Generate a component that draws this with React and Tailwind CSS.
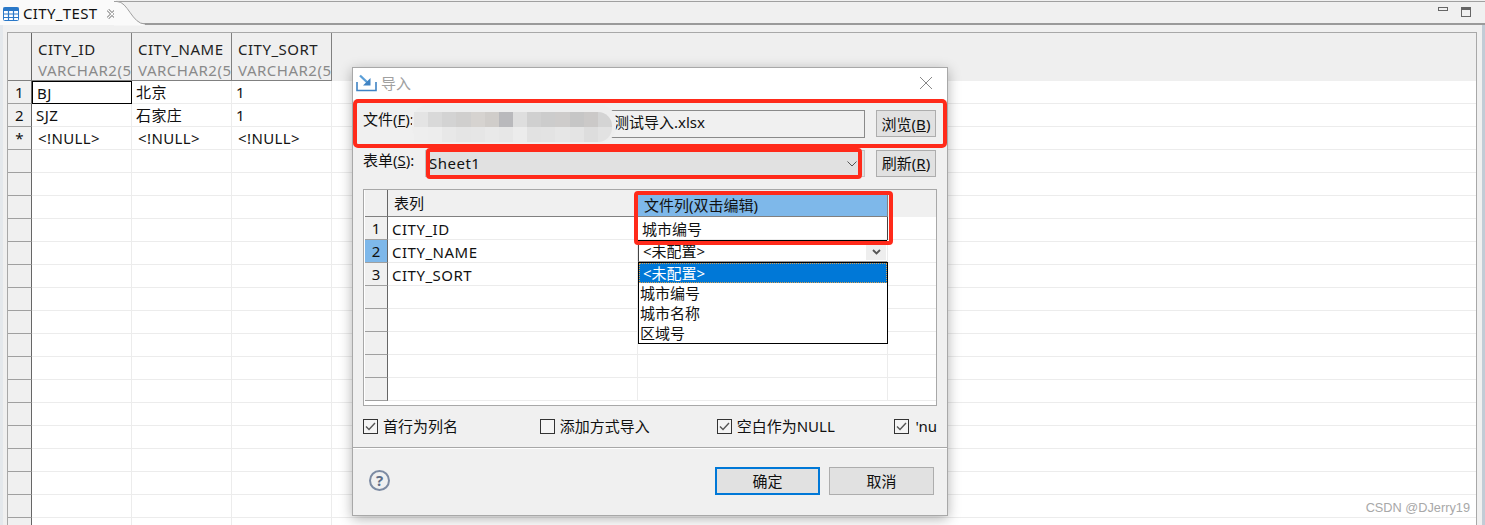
import React from "react";

const FONT = "font-['Noto_Sans','Noto_Sans_CJK_SC',sans-serif]";

const tableRows = [
  { num: "1", cells: ["BJ", "北京", "1"], selected: true },
  { num: "2", cells: ["SJZ", "石家庄", "1"] },
  { num: "*", cells: ["<!NULL>", "<!NULL>", "<!NULL>"], isNew: true },
];

const mosaicTop = [
  "bg-[#e4e4e4]", "bg-[#d9d9d9]", "bg-[#d3d3d3]", "bg-[#d0cfce]", "bg-[#d6d3d0]", "bg-[#d0cdca]", "bg-[#b9b9bc]",
  "bg-[#dedede]", "bg-[#d0d0d0]", "bg-[#cccccc]", "bg-[#cecccb]", "bg-[#c6c6c6]", "bg-[#cbc9c8]", "bg-[#d4d4d4]",
];
const mosaicBottom = [
  "bg-[#eeeeee]", "bg-[#ededed]", "bg-[#e8e8e8]", "bg-[#e5e5e5]", "bg-[#e6e6e6]", "bg-[#e9e9e9]", "bg-[#e7e7e7]",
  "bg-[#ececec]", "bg-[#e2e2e2]", "bg-[#e3e3e3]", "bg-[#e6e6e6]", "bg-[#e4e4e4]", "bg-[#dddddd]", "bg-[#e2e2e2]",
];

function TableIcon() {
  return (
    <svg width="16" height="14" viewBox="0 0 16 14" className="shrink-0">
      <rect x="0.5" y="0.5" width="15" height="13" rx="1" fill="#fff" stroke="#2a78c8" />
      <rect x="0.5" y="0.5" width="15" height="3.5" fill="#2a78c8" />
      <path d="M1 7h14M1 10.5h14M5.5 3v10M10.5 3v10" stroke="#2a78c8" strokeWidth="1.2" />
    </svg>
  );
}

function Check({ checked, className = "" }) {
  return (
    <span className={`flex h-[15px] w-[15px] shrink-0 items-center justify-center border border-[#333] bg-[#f4f4f4] ${className}`}>
      {checked && (
        <svg width="11" height="9" viewBox="0 0 11 9" fill="none" stroke="#555" strokeWidth="1.4">
          <path d="M1 4.5 4 7.5 10 1" />
        </svg>
      )}
    </span>
  );
}

function Background() {
  return (
    <div className="flex h-full flex-col">
      {/* editor tab bar */}
      <div className="relative flex h-[25px] shrink-0 border-b-2 border-[#9a9a9a] bg-[#f0f0f0]">
        <div className="absolute right-0 top-px h-px w-full bg-[#a0a0a0]" />
        <div className="relative z-10 flex h-[25px] w-[116px] items-center gap-[4px] bg-[#fafafa] pl-[3px] pt-[2px] text-[15px] leading-none tracking-[0.35px] text-[#111]">
          <TableIcon />
          <span className="whitespace-nowrap">CITY_TEST</span>
          <svg width="12" height="12" viewBox="0 0 12 12" className="ml-[5px] shrink-0">
            <path d="M2 2l8 8M10 2l-8 8" stroke="#777" strokeWidth="3" />
            <path d="M2 2l8 8M10 2l-8 8" stroke="#fff" strokeWidth="1.2" />
          </svg>
          <svg width="32" height="26" viewBox="0 0 32 26" className="absolute left-[114px] top-0">
            <path d="M0 25.5V1.5h3C14 1.5 18 24 31 24v1.5Z" fill="#fafafa" />
            <path d="M0 1.5h3C14 1.5 18 24 31 24" fill="none" stroke="#a0a0a0" />
          </svg>
        </div>
        <div className="ml-auto flex items-start gap-[13px] pr-[14px] pt-[7px]">
          <span className="h-[4px] w-[10px] border border-[#666]" />
          <span className="h-[10px] w-[10px] border border-[#666] border-t-[3px]" />
        </div>
      </div>

      {/* result grid */}
      <div className="flex min-h-0 flex-1 flex-col border-x-[3px] border-r-[#c2ccd6] border-l-[#e4e8ec] bg-[#f0f0f0] pl-[4px] pr-[5px] pt-[7px]">
        <div className="flex min-h-0 flex-1 flex-col overflow-hidden border border-b-0 border-[#a8a8a8] bg-white">
          <div className="flex h-[48px] shrink-0 bg-[#efefef]">
            <div className="h-full w-[24px] shrink-0 border-b border-r border-b-[#808080] border-r-[#666]" />
            {["CITY_ID", "CITY_NAME", "CITY_SORT"].map((name) => (
              <div key={name} className="flex h-full w-[100px] flex-col overflow-hidden border-b border-r border-[#808080] pl-[6px] pt-[6px] text-[15px] leading-[21px] tracking-[0.5px] whitespace-nowrap">
                <span className="text-[#222]">{name}</span>
                <span className="text-[#8a8a8a]">VARCHAR2(50)</span>
              </div>
            ))}
          </div>
          {Array.from({ length: 20 }).map((_, i) => {
            const row = tableRows[i];
            return (
              <div key={i} className="flex h-[23px] shrink-0 border-b border-[#ececec] text-[15px] leading-[23px] tracking-[0.4px] text-[#111]">
                <div className="flex h-[23px] w-[24px] shrink-0 items-center justify-center border-b border-r border-b-[#a0a0a0] border-r-[#666] bg-[#f0f0f0]">
                  {row?.num}
                </div>
                {[0, 1, 2].map((c) => (
                  <div
                    key={c}
                    className={`h-[23px] w-[100px] shrink-0 whitespace-nowrap ${row?.isNew ? "pl-[6px]" : "pl-[4px]"} ${
                      row?.selected && c === 0 ? "border border-black" : "border-r border-[#ececec]"
                    }`}
                  >
                    {row?.cells[c]}
                  </div>
                ))}
              </div>
            );
          })}
        </div>
      </div>
    </div>
  );
}

function ImportDialog() {
  const rows = [
    { num: "1", name: "CITY_ID" },
    { num: "2", name: "CITY_NAME", active: true },
    { num: "3", name: "CITY_SORT" },
    {}, {}, {}, {}, {},
  ];

  return (
    <div className="absolute left-[352px] top-[67px] z-20 flex h-[449px] w-[596px] flex-col border border-[#a8a8a8] bg-[#f0f0f0] text-[15px] text-[#111] shadow-[0_3px_12px_rgba(0,0,0,0.3)]">
      {/* title */}
      <div className="flex h-[32px] shrink-0 items-center bg-white pb-[2px] pl-[3px] pr-[14px]">
        <svg width="21" height="18" viewBox="0 0 21 18" fill="none" className="shrink-0">
          <path d="M1 8v8.5h19V8" stroke="#3f83c4" strokeWidth="1.6" />
          <path d="M4 1.5 13 10" stroke="#5b9fd8" strokeWidth="2.4" />
          <path d="M7 11.5h7.5V4Z" fill="#3f83c4" />
        </svg>
        <span className="ml-[4px] text-[#a0a0a0]">导入</span>
        <svg width="14" height="14" viewBox="0 0 14 14" className="ml-auto" stroke="#888" strokeWidth="1">
          <path d="M1 1l12 12M13 1 1 13" />
        </svg>
      </div>

      <div className="flex flex-1 flex-col px-[10px] pt-[10px]">
        {/* file row */}
        <div className="flex h-[28px] items-start">
          <span className="w-[62px] shrink-0 leading-[19px]">文件(<u>F</u>):</span>
          <div className="flex h-[28px] w-[440px] items-center justify-end border border-[#8a8a8a] bg-[#f0f0f0] pb-[3px] pr-[159px] leading-none">
            <span className="whitespace-nowrap">测试导入.xlsx</span>
          </div>
          <button className="ml-[11px] h-[27px] w-[60px] border border-[#adadad] bg-[#e1e1e1] pt-[1px] leading-none">浏览(<u>B</u>)</button>
        </div>

        {/* sheet row */}
        <div className="mt-[12px] flex h-[28px] items-start">
          <span className="w-[62px] shrink-0 leading-[20px]">表单(<u>S</u>):</span>
          <div className="flex h-[27px] w-[440px] items-center border border-[#c4c4c4] bg-[#e1e1e1] pl-[3px] pr-[5px]">
            <span className="tracking-[0.5px]">Sheet1</span>
            <svg width="10" height="6" viewBox="0 0 10 6" fill="none" stroke="#555" className="ml-auto mr-[2px]">
              <path d="M.5.5 5 5 9.5.5" />
            </svg>
          </div>
          <button className="ml-[11px] h-[27px] w-[60px] border border-[#adadad] bg-[#e1e1e1] leading-none">刷新(<u>R</u>)</button>
        </div>

        {/* column mapping table */}
        <div className="relative mt-[11px] flex h-[217px] w-[574px] shrink-0 flex-col overflow-hidden border border-[#a8a8a8] bg-white pl-px pr-0">
          <div className="flex h-[27px] shrink-0 bg-[#f0f0f0]">
            <div className="h-full w-[23px] shrink-0 border-b border-r border-b-[#808080] border-r-[#666]" />
            <div className="h-full w-[250px] shrink-0 border-b border-[#808080] pl-[6px] leading-[27px]">表列</div>
            <div className="flex h-full w-[250px] shrink-0 flex-col justify-end">
              <div className="h-[22px] border-b border-r border-[#808080] bg-[#7eb8ea] pl-[6px] leading-[20px]">文件列(双击编辑)</div>
            </div>
          </div>
          {rows.map((row, i) => (
            <div key={i} className="flex h-[23px] shrink-0 border-b border-[#ececec] leading-[24px]">
              <div
                className={`flex h-[23px] w-[23px] shrink-0 items-center justify-center border-b border-r border-b-[#a0a0a0] border-r-[#666] ${
                  row.active ? "bg-[#7eb8ea]" : "bg-[#f0f0f0]"
                }`}
              >
                {row.num}
              </div>
              <div className="w-[250px] shrink-0 border-r border-[#ececec] pl-[4px] tracking-[0.5px]">{row.name}</div>
              <div className={`w-[250px] shrink-0 border-r border-[#ececec] pl-[4px] ${i === 0 ? "h-[24px] border-b border-b-black border-r-[#444]" : ""}`}>
                {i === 0 && "城市编号"}
                {i === 1 && (
                  <div className="-ml-[4px] mt-[2px] flex h-[20px] items-center border-b border-l border-b-[#999] border-l-[#444] pl-[4px] leading-none">
                    <span>&lt;未配置&gt;</span>
                    <span className="ml-auto mr-[1px] flex h-[16px] w-[20px] items-center justify-center bg-[#eeeeee]">
                      <svg width="9" height="6" viewBox="0 0 9 6" fill="none" stroke="#555" strokeWidth="1.8">
                        <path d="M1 1l3.5 3.5L8 1" />
                      </svg>
                    </span>
                  </div>
                )}
              </div>
            </div>
          ))}

          {/* open combo list */}
          <div className="absolute left-[274px] top-[72px] flex h-[82px] w-[250px] flex-col border border-black bg-white leading-[20px]">
            <div className="h-[20px] border border-dotted border-[#d9a050] bg-[#0078d7] pl-[3px] leading-[18px] text-white">&lt;未配置&gt;</div>
            <div className="h-[20px] pl-[1px]">城市编号</div>
            <div className="h-[20px] pl-[1px]">城市名称</div>
            <div className="h-[20px] pl-[1px]">区域号</div>
          </div>
        </div>

        {/* options */}
        <div className="mt-[13px] flex h-[15px] items-center leading-none">
          <div className="flex w-[177px] items-center gap-[5px]"><Check checked /><span>首行为列名</span></div>
          <div className="flex w-[177px] items-center gap-[5px]"><Check /><span>添加方式导入</span></div>
          <div className="flex w-[177px] items-center gap-[5px]"><Check checked /><span>空白作为NULL</span></div>
          <div className="flex items-center gap-[7px]"><Check checked /><span>'nu</span></div>
        </div>
      </div>

      {/* footer */}
      <div className="flex h-[68px] shrink-0 items-start border-t border-[#a8a8a8] px-[16px] pt-[19px] shadow-[inset_0_1px_0_#fff]">
        <span className="mt-[3px] flex h-[21px] w-[21px] items-center justify-center rounded-full border-2 border-[#7d8ba3] text-[15px] font-bold leading-none text-[#5f6e88]">?</span>
        <button className="ml-auto h-[28px] w-[105px] border-2 border-[#0078d7] bg-[#e1e1e1]">确定</button>
        <button className="ml-[9px] mr-[-3px] h-[28px] w-[105px] border border-[#adadad] bg-[#e1e1e1]">取消</button>
      </div>
    </div>
  );
}

function Annotations() {
  return (
    <>
      {/* pixelated path mask */}
      <div className="absolute left-[412px] top-[105px] z-30 h-[38px] w-[204px] rounded-[16px] bg-[#eeeeee] pl-[2px] pt-[7px]">
        <div className="grid w-[198px] grid-cols-[repeat(14,1fr)] overflow-hidden rounded-r-[14px] blur-[0.5px]">
          {[...mosaicTop, ...mosaicBottom].map((c, i) => (
            <div key={i} className={`h-[15px] ${c}`} />
          ))}
        </div>
      </div>
      {/* red callouts */}
      <div className="absolute left-[353px] top-[99px] z-40 h-[49px] w-[594px] rounded-[5px] border-4 border-[#ff2a1a]" />
      <div className="absolute left-[426px] top-[148px] z-40 h-[31px] w-[436px] rounded-[4px] border-4 border-[#ff2a1a]" />
      <div className="absolute left-[634px] top-[191px] z-40 h-[54px] w-[259px] rounded-[4px] border-4 border-[#ff2a1a]" />
    </>
  );
}

export default function App() {
  return (
    <div className={`relative h-[525px] w-[1485px] overflow-hidden bg-white ${FONT}`}>
      <Background />
      <ImportDialog />
      <Annotations />
      <span className="absolute bottom-[10px] right-[15px] z-30 font-['Liberation_Sans',sans-serif] text-[12.75px] leading-none text-[#a8a8a8]">CSDN @DJerry19</span>
    </div>
  );
}
